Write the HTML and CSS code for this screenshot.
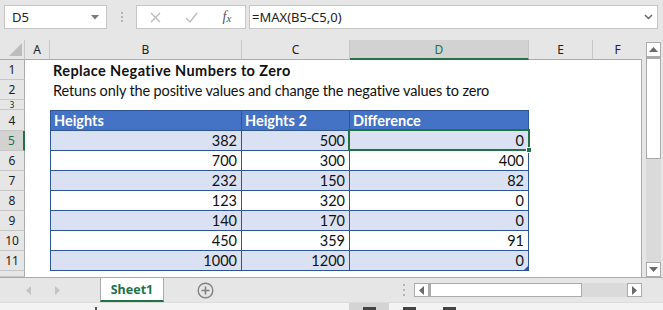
FILE: index.html
```html
<!DOCTYPE html>
<html lang="en">
<head>
    <meta charset="UTF-8">
    <title>Replace Negative Numbers to Zero</title>
    <link rel="stylesheet" href="styles.css">
</head>
<body>
<div class="window">
    <!-- formula bar -->
    <div class="formula-bar">
        <div class="name-box">
            <span>D5</span>
            <svg class="caret" width="8" height="5" viewBox="0 0 8 5"><path d="M0 0h8L4 4.5z" fill="#7a7a7a"/></svg>
        </div>
        <div class="grip"><i></i><i></i><i></i></div>
        <div class="fx-box">
            <span class="fx-slot">
                <svg width="11" height="11" viewBox="0 0 11 11"><path d="M1 1l9 9M10 1l-9 9" stroke="#bdbdbd" stroke-width="1.4" fill="none"/></svg>
            </span>
            <span class="fx-slot">
                <svg width="13" height="11" viewBox="0 0 13 11"><path d="M1 6l4 4 7-9" stroke="#bdbdbd" stroke-width="1.4" fill="none"/></svg>
            </span>
            <span class="fx-slot fx">f<sub>x</sub></span>
        </div>
        <div class="formula-box">
            <span>=MAX(B5-C5,0)</span>
            <svg width="9" height="6" viewBox="0 0 9 6"><path d="M1 1l3.5 3.5L8 1" stroke="#666" stroke-width="1.5" fill="none"/></svg>
        </div>
    </div>

    <!-- sheet -->
    <div class="sheet-row">
        <div class="grid">
            <div class="corner"><svg width="13" height="13" viewBox="0 0 13 13"><path d="M13 0v13H0z" fill="#bdbdbd"/></svg></div>
            <div class="col-hdr">A</div>
            <div class="col-hdr">B</div>
            <div class="col-hdr">C</div>
            <div class="col-hdr active">D</div>
            <div class="col-hdr">E</div>
            <div class="col-hdr last">F</div>

            <div class="row-hdr">1</div>
            <div class="cell"></div>
            <div class="cell title">Replace Negative Numbers to Zero</div>
            <div class="cell"></div><div class="cell"></div><div class="cell"></div><div class="cell last"></div>

            <div class="row-hdr">2</div>
            <div class="cell"></div>
            <div class="cell subtitle">Retuns only the positive values and change the negative values to zero</div>
            <div class="cell"></div><div class="cell"></div><div class="cell"></div><div class="cell last"></div>

            <div class="row-hdr short">3</div>
            <div class="cell"></div><div class="cell"></div><div class="cell"></div><div class="cell"></div><div class="cell"></div><div class="cell last"></div>

            <div class="row-hdr">4</div>
            <div class="cell"></div>
            <div class="t th first">Heights</div>
            <div class="t th">Heights 2</div>
            <div class="t th">Difference</div>
            <div class="cell"></div><div class="cell last"></div>

            <div class="row-hdr active">5</div>
            <div class="cell"></div>
            <div class="t band first num">382</div>
            <div class="t band num">500</div>
            <div class="t band num">0</div>
            <div class="cell"></div><div class="cell last"></div>

            <div class="row-hdr">6</div>
            <div class="cell"></div>
            <div class="t first num">700</div>
            <div class="t num">300</div>
            <div class="t num">400</div>
            <div class="cell"></div><div class="cell last"></div>

            <div class="row-hdr">7</div>
            <div class="cell"></div>
            <div class="t band first num">232</div>
            <div class="t band num">150</div>
            <div class="t band num">82</div>
            <div class="cell"></div><div class="cell last"></div>

            <div class="row-hdr">8</div>
            <div class="cell"></div>
            <div class="t first num">123</div>
            <div class="t num">320</div>
            <div class="t num">0</div>
            <div class="cell"></div><div class="cell last"></div>

            <div class="row-hdr">9</div>
            <div class="cell"></div>
            <div class="t band first num">140</div>
            <div class="t band num">170</div>
            <div class="t band num">0</div>
            <div class="cell"></div><div class="cell last"></div>

            <div class="row-hdr">10</div>
            <div class="cell"></div>
            <div class="t first num">450</div>
            <div class="t num">359</div>
            <div class="t num">91</div>
            <div class="cell"></div><div class="cell last"></div>

            <div class="row-hdr">11</div>
            <div class="cell"></div>
            <div class="t band first num">1000</div>
            <div class="t band num">1200</div>
            <div class="t band num">0</div>
            <div class="cell"></div><div class="cell last"></div>

            <div class="row-hdr"></div>
            <div class="cell"></div><div class="cell"></div><div class="cell"></div><div class="cell"></div><div class="cell"></div><div class="cell last"></div>

            <!-- active cell and table handles -->
            <div class="selection"></div>
            <div class="fill-handle"></div>
            <div class="table-handle"></div>
        </div>

        <div class="vscroll">
            <div class="sb-btn"><svg width="9" height="5" viewBox="0 0 9 5"><path d="M0 5h9L4.5 0z" fill="#6a6a6a"/></svg></div>
            <div class="sb-thumb-v"></div>
            <div class="sb-track"></div>
            <div class="sb-btn"><svg width="9" height="5" viewBox="0 0 9 5"><path d="M0 0h9L4.5 5z" fill="#6a6a6a"/></svg></div>
        </div>
    </div>

    <!-- sheet tabs -->
    <div class="tab-bar">
        <div class="tab-nav">
            <svg width="5" height="9" viewBox="0 0 5 9"><path d="M5 0v9L0 4.5z" fill="#c4c4c4"/></svg>
            <svg width="5" height="9" viewBox="0 0 5 9"><path d="M0 0v9l5-4.5z" fill="#c4c4c4"/></svg>
        </div>
        <div class="sheet-tab">Sheet1</div>
        <div class="add-sheet">
            <svg width="17" height="17" viewBox="0 0 17 17"><circle cx="8.5" cy="8.5" r="7.3" stroke="#808080" stroke-width="1.4" fill="none"/><path d="M8.5 4.5v8M4.5 8.5h8" stroke="#808080" stroke-width="1.6"/></svg>
        </div>
        <div class="splitter"><i></i><i></i><i></i></div>
        <div class="hscroll">
            <div class="sb-btn h"><svg width="5" height="9" viewBox="0 0 5 9"><path d="M5 0v9L0 4.5z" fill="#6a6a6a"/></svg></div>
            <div class="sb-thumb-h"></div>
            <div class="sb-track h"></div>
            <div class="sb-btn h"><svg width="5" height="9" viewBox="0 0 5 9"><path d="M0 0v9l5-4.5z" fill="#6a6a6a"/></svg></div>
        </div>
    </div>

    <!-- status bar (cut off at the bottom) -->
    <div class="status-bar">
        <span class="st-dot"></span>
        <span class="st-view">
            <span class="st-btn selected"><b></b></span>
            <span class="st-btn"><b></b></span>
            <span class="st-btn"><b></b></span>
        </span>
    </div>
</div>
</body>
</html>
```

FILE: styles.css
```css
:root {
    --chrome: #e6e6e6;
    --chrome-dark: #d2d2d2;
    --line: #c6c6c6;
    --line-dark: #ababab;
    --excel-green: #217346;
    --tbl-blue: #4472c4;
    --tbl-band: #d9e1f2;
    --tbl-line: #2f5597;
}

* {
    box-sizing: border-box;
}

body {
    margin: 0;
    background-color: var(--chrome);
    font-family: "Noto Sans", "Open Sans", sans-serif;
    color: #222;
}

.window {
    width: 663px;
    height: 310px;
    display: flex;
    flex-direction: column;
    overflow: hidden;
}

/* ---------- formula bar ---------- */
.formula-bar {
    height: 40px;
    flex: none;
    display: flex;
    align-items: flex-start;
    padding: 5px 5px 0 4px;
}

.name-box {
    width: 103px;
    height: 24px;
    background-color: #fff;
    border: 1px solid var(--line);
    display: flex;
    align-items: center;
    justify-content: space-between;
    padding: 0 7px 0 7px;
    font-size: 13px;
}

.grip {
    width: 29px;
    height: 24px;
    display: flex;
    flex-direction: column;
    align-items: center;
    justify-content: center;
    gap: 2px;
}

.grip i, .splitter i {
    display: block;
    width: 2px;
    height: 2px;
    background-color: #b4b4b4;
}

.fx-box {
    width: 110px;
    height: 24px;
    background-color: #fff;
    border: 1px solid var(--line);
    display: flex;
}

.fx-slot {
    width: 36px;
    display: flex;
    align-items: center;
    justify-content: center;
}

.fx {
    font-family: "Liberation Serif", serif;
    font-style: italic;
    font-size: 14px;
    color: #555;
}

.fx sub {
    font-size: 11px;
    vertical-align: 0;
    position: relative;
    top: 1px;
}

.formula-box {
    width: 409px;
    height: 24px;
    margin-left: 3px;
    background-color: #fff;
    border: 1px solid var(--line);
    display: flex;
    align-items: center;
    justify-content: space-between;
    padding: 0 4px 0 2px;
    font-size: 13px;
}

/* ---------- grid ---------- */
.sheet-row {
    height: 237px;
    flex: none;
    display: flex;
}

.grid {
    position: relative;
    display: grid;
    grid-template-columns: 25px 25px 192px 108px 179px 64px 49px;
    grid-template-rows: 20px 20px 20px 10px 21px repeat(7, 20px) 6px;
    background-color: #fff;
}

.corner {
    background-color: var(--chrome);
    border-right: 1px solid var(--line);
    border-bottom: 1px solid var(--line-dark);
    display: flex;
    align-items: flex-end;
    justify-content: flex-end;
    padding: 0 2px 3px 0;
}

.col-hdr {
    background-color: var(--chrome);
    border-right: 1px solid var(--line);
    border-bottom: 1px solid var(--line-dark);
    display: flex;
    align-items: center;
    justify-content: center;
    font-size: 12px;
}

.col-hdr.last {
    border-right: none;
}

.col-hdr.active {
    background-color: var(--chrome-dark);
    color: var(--excel-green);
    border-bottom: 2px solid var(--excel-green);
}

.row-hdr {
    background-color: var(--chrome);
    border-right: 1px solid var(--line-dark);
    border-bottom: 1px solid var(--line);
    display: flex;
    align-items: center;
    justify-content: center;
    font-size: 12px;
    overflow: hidden;
}

.row-hdr.short {
    font-size: 8px;
    line-height: 9px;
}

.row-hdr.active {
    background-color: var(--chrome-dark);
    color: var(--excel-green);
    border-right: 2px solid var(--excel-green);
}

.cell {
    overflow: visible;
    white-space: nowrap;
}

.cell.last {
    border-right: 1px solid var(--line-dark);
}

.title, .subtitle, .t {
    font-family: "Lato", "Open Sans", sans-serif;
    font-size: 14.5px;
    display: flex;
    align-items: flex-end;
    padding-left: 3px;
    padding-bottom: 1px;
    color: #111;
}

.title {
    font-weight: 700;
    letter-spacing: 0.4px;
}

.subtitle {
    letter-spacing: -0.14px;
}

.t {
    border-right: 1px solid var(--tbl-line);
    border-bottom: 1px solid var(--tbl-line);
    padding-right: 4px;
    white-space: nowrap;
}

.t.first {
    border-left: 1px solid var(--tbl-line);
}

.t.th {
    background-color: var(--tbl-blue);
    border-top: 1px solid var(--tbl-line);
    color: #fff;
    font-weight: 700;
}

.t.band {
    background-color: var(--tbl-band);
}

.t.num {
    justify-content: flex-end;
}

.selection {
    position: absolute;
    left: 348px;
    top: 89px;
    width: 182px;
    height: 22px;
    border: 2px solid var(--excel-green);
}

.fill-handle {
    position: absolute;
    left: 526px;
    top: 107px;
    width: 6px;
    height: 6px;
    background-color: var(--excel-green);
    border: 1px solid #fff;
}

.table-handle {
    position: absolute;
    left: 524px;
    top: 226px;
    width: 0;
    height: 0;
    border-left: 4px solid transparent;
    border-bottom: 4px solid var(--tbl-line);
}

/* ---------- scrollbars ---------- */
.vscroll {
    width: 21px;
    display: flex;
    flex-direction: column;
    padding: 2px 2px 0 4px;
}

.sb-btn {
    flex: none;
    height: 15px;
    background-color: #fff;
    border: 1px solid var(--line-dark);
    display: flex;
    align-items: center;
    justify-content: center;
}

.sb-thumb-v {
    height: 102px;
    background-color: #fff;
    border: 1px solid var(--line-dark);
    border-top-width: 2px;
}

.sb-track {
    flex: 1;
    background-color: #dadada;
}

/* ---------- tab bar ---------- */
.tab-bar {
    height: 25px;
    flex: none;
    display: flex;
    align-items: stretch;
    border-top: 1px solid var(--line-dark);
}

.tab-nav {
    width: 100px;
    display: flex;
    align-items: center;
    gap: 24px;
    padding-left: 26px;
}

.sheet-tab {
    width: 64px;
    background-color: #fff;
    border-left: 1px solid var(--line-dark);
    border-right: 1px solid var(--line-dark);
    border-bottom: 2px solid var(--excel-green);
    color: var(--excel-green);
    font-weight: 700;
    font-size: 12.5px;
    display: flex;
    align-items: center;
    justify-content: center;
}

.add-sheet {
    width: 230px;
    display: flex;
    align-items: center;
    padding-left: 33px;
}

.splitter {
    width: 20px;
    display: flex;
    flex-direction: column;
    align-items: center;
    justify-content: center;
    gap: 3px;
}

.hscroll {
    width: 228px;
    height: 14px;
    align-self: center;
    display: flex;
}

.sb-btn.h {
    width: 15px;
    height: 14px;
}

.sb-thumb-h {
    width: 153px;
    background-color: #fff;
    border: 1px solid var(--line-dark);
    border-left-width: 2px;
}

.sb-track.h {
    flex: 1;
}

/* ---------- status bar ---------- */
.status-bar {
    flex: 1;
    background-color: #f3f3f3;
    border-top: 1px solid #dcdcdc;
    position: relative;
    display: flex;
    align-items: flex-end;
}

.st-dot {
    width: 2px;
    height: 3px;
    margin-left: 95px;
    background-color: #555;
}

.st-view {
    display: flex;
    margin-left: 252px;
}

.st-btn {
    width: 40px;
    height: 7px;
    display: flex;
    justify-content: center;
    align-items: flex-end;
}

.st-btn.selected {
    background-color: #d4d4d4;
}

.st-btn b {
    width: 13px;
    height: 3px;
    background-color: #444;
}
```
